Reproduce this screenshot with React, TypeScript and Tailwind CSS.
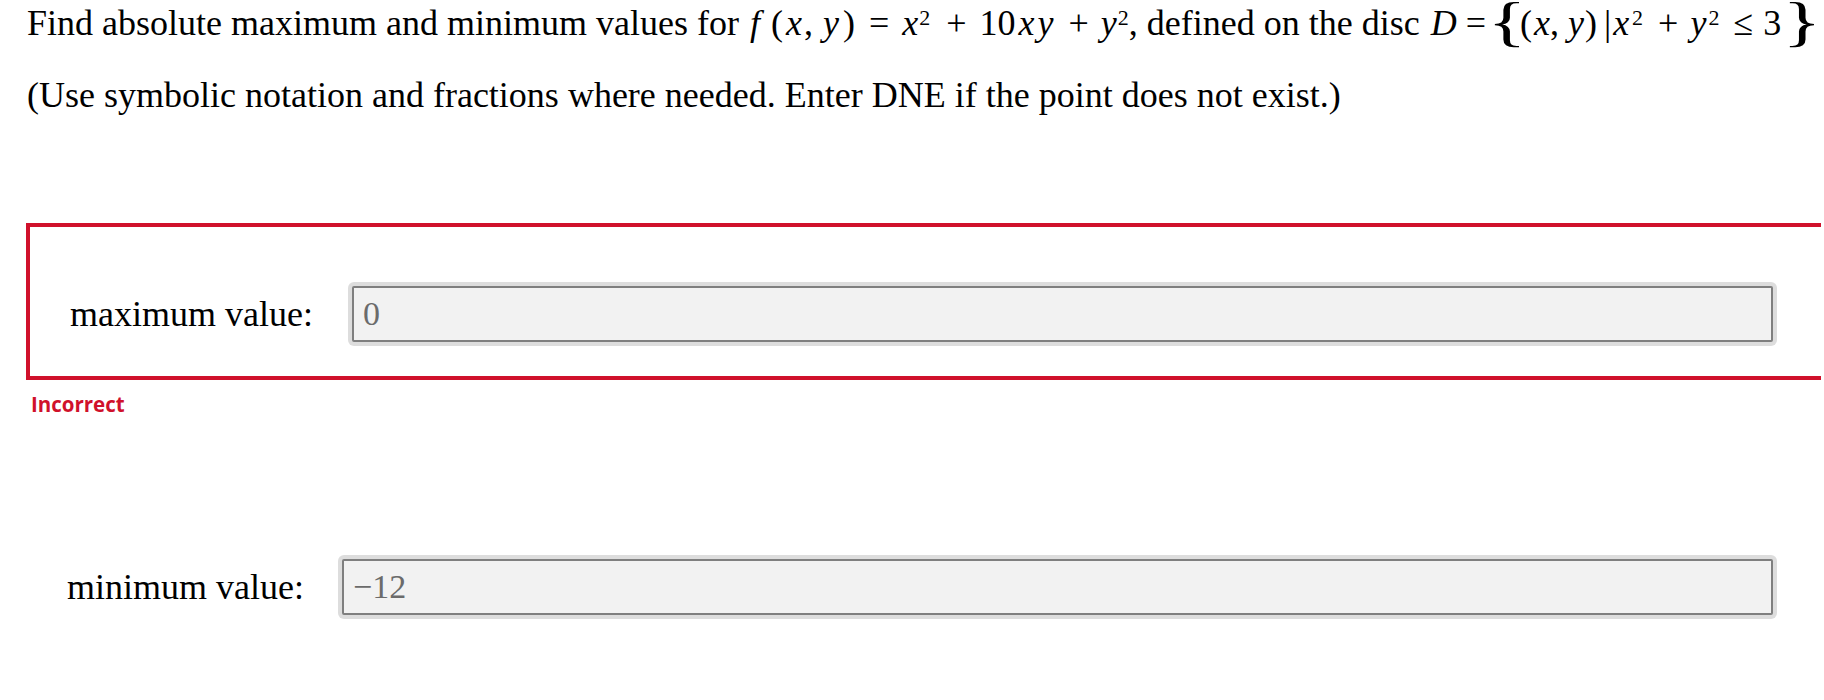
import React from "react"

const RED = "border-[#d0112b]"

function Sup({ children, className = "" }: { children: React.ReactNode; className?: string }) {
  return <span className={`relative -top-[10px] text-[22px] leading-[0] ${className}`}>{children}</span>
}

function Brace({ children, className = "" }: { children: React.ReactNode; className?: string }) {
  return (
    <span className={`relative top-[5px] inline-block scale-x-150 text-[54px] leading-[0] ${className}`}>
      {children}
    </span>
  )
}

function Field({ value }: { value: string }) {
  return (
    <div className="flex-1 rounded-[6px] bg-[#dddddd] p-[4px]">
      <input
        readOnly
        value={value}
        className="block h-[56px] w-full rounded-[2px] border-2 border-[#7f7f7f] bg-[#f2f2f2] pl-[9px] font-['Liberation_Serif',serif] text-[34px] text-[#6b6b6b] outline-none"
      />
    </div>
  )
}

export default function App() {
  return (
    <div className="h-[700px] w-[1824px] overflow-hidden bg-white font-['Liberation_Serif','Times_New_Roman',serif] text-[36px] text-black">
      {/* Question text */}
      <div className="pl-[27px] pt-[3px]">
        <p className="h-[40px] whitespace-nowrap leading-[40px]">
          Find absolute maximum and minimum values for
          {/* f(x, y) = x^2 + 10xy + y^2 */}
          <span className="ml-[11px] italic">f</span>
          <span className="ml-[11px]">(</span>
          <span className="ml-[3px] italic">x</span>
          <span className="ml-[2px]">,</span>
          <span className="ml-[10px] italic">y</span>
          <span className="ml-[4px]">)</span>
          <span className="ml-[14px]">=</span>
          <span className="ml-[13px] italic">x</span>
          <Sup className="ml-[1px]">2</Sup>
          <span className="ml-[16px]">+</span>
          <span className="ml-[13px]">10</span>
          <span className="ml-[3px] italic">x</span>
          <span className="ml-[3px] italic">y</span>
          <span className="ml-[15px]">+</span>
          <span className="ml-[12px] italic">y</span>
          <Sup className="ml-[1px]">2</Sup>
          <span>, defined on the disc </span>
          {/* D = {(x, y) | x^2 + y^2 <= 3} */}
          <span className="ml-[2px] italic">D</span>
          <span className="ml-[9px]">=</span>
          <Brace className="ml-[8px]">{"{"}</Brace>
          <span>(</span>
          <span className="ml-[2px] italic">x</span>
          <span>,</span>
          <span className="ml-[9px] italic">y</span>
          <span className="ml-[1px]">)</span>
          <span className="ml-[7px]">|</span>
          <span className="ml-[2px] italic">x</span>
          <Sup className="ml-[3px]">2</Sup>
          <span className="ml-[15px]">+</span>
          <span className="ml-[12px] italic">y</span>
          <Sup className="ml-[2px]">2</Sup>
          <span className="ml-[14px]">≤</span>
          <span className="ml-[10px]">3</span>
          <Brace className="ml-[8px]">{"}"}</Brace>
        </p>
        <p className="mt-[32px] leading-[40px]">
          (Use symbolic notation and fractions where needed. Enter DNE if the point does not exist.)
        </p>
      </div>

      {/* Maximum (marked incorrect) */}
      <div className={`ml-[26px] mr-[3px] mt-[108px] flex items-center gap-[35px] border-4 border-r-0 ${RED} pb-[30px] pl-[40px] pr-[44px] pt-[55px]`}>
        <span className="whitespace-nowrap leading-[40px]">maximum value:</span>
        <Field value="0" />
      </div>
      <p className="ml-[31px] mt-[10px] font-['Open_Sans',sans-serif] text-[20.5px] font-bold leading-[28px] text-[#d0112b]">
        Incorrect
      </p>

      {/* Minimum */}
      <div className="mt-[137px] flex items-center gap-[34px] pl-[67px] pr-[47px]">
        <span className="whitespace-nowrap leading-[40px]">minimum value:</span>
        <Field value="−12" />
      </div>
    </div>
  )
}
